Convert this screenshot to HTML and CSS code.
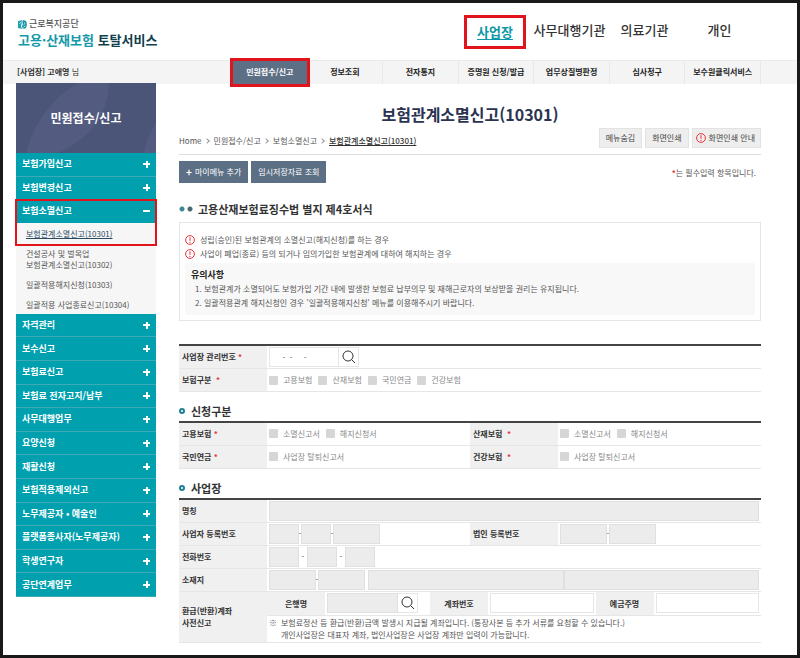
FILE: index.html
```html
<!DOCTYPE html>
<html lang="ko">
<head>
  <meta charset="UTF-8"/>
  <meta name="viewport" content="width=device-width, initial-scale=1"/>
  <title>보험관계소멸신고(10301) - 고용·산재보험 토탈서비스</title>
  <link rel="stylesheet" href="styles.css">
</head>
<body>
  <header class="header">
    <a class="logo" href="#">
      <span class="logo-org">
        <svg class="logo-mark" viewBox="0 0 10 10" aria-hidden="true">
          <path d="M0 1.500L4.500 0C3.500 2 5 3.500 3.500 5.500C3 7.500 4 9 5.500 10L0 9Z" fill="#1ba3b5"/>
          <path d="M5 0.500C8 0 10 1.500 9.800 5C9.800 8 8.500 9.800 6.500 9.800C4.500 8.500 4 7 5 5.500C6 4 4.500 2.500 5 0.500Z" fill="#0d8f9e"/>
          <path d="M1.500 4L3.500 2.500M6 5.500C8 5 8 3 6.500 2.500M6 8L8.500 6.500" fill="none" stroke="#fff" stroke-width="0.800"/>
        </svg>
        근로복지공단
      </span>
      <span class="logo-name"><em>고용·산재보험</em> 토탈서비스</span>
    </a>
    <nav class="user-menu">
      <a class="on" href="#">사업장</a>
      <a href="#">사무대행기관</a>
      <a href="#">의료기관</a>
      <a href="#">개인</a>
    </nav>
  </header>

  <div class="gnb">
    <p class="user"><b>[사업장] 고애영</b> 님</p>
    <nav class="gnb-menu">
      <a class="on" href="#">민원접수/신고</a>
      <a href="#">정보조회</a>
      <a href="#">전자통지</a>
      <a href="#">증명원 신청/발급</a>
      <a href="#">업무상질병판정</a>
      <a href="#">심사청구</a>
      <a href="#">보수원클릭서비스</a>
    </nav>
  </div>

  <div class="container">
    <aside class="side">
      <h2 class="side-title">
        <svg class="side-leaf" viewBox="0 0 140 70" preserveAspectRatio="none" aria-hidden="true">
          <path d="M93 0H62C38 14 18 38 10 70H42C72 56 92 34 93 0Z"/>
          <path d="M140 40C134 48 130 58 128 70H140Z"/>
        </svg>
        <span>민원접수/신고</span>
      </h2>
      <nav class="lnb">
        <button type="button">보험가입신고</button>
        <button type="button">보험변경신고</button>
        <button type="button" class="open">보험소멸신고</button>
        <ul class="sub">
          <li class="on"><a href="#">보험관계소멸신고(10301)</a></li>
          <li><a href="#">건설공사 및 벌목업<br>보험관계소멸신고(10302)</a></li>
          <li><a href="#">일괄적용해지신청(10303)</a></li>
          <li><a href="#">일괄적용 사업종료신고(10304)</a></li>
        </ul>
        <button type="button">자격관리</button>
        <button type="button">보수신고</button>
        <button type="button">보험료신고</button>
        <button type="button">보험료 전자고지/납부</button>
        <button type="button">사무대행업무</button>
        <button type="button">요양신청</button>
        <button type="button">재활신청</button>
        <button type="button">보험적용제외신고</button>
        <button type="button">노무제공자 • 예술인</button>
        <button type="button">플랫폼종사자(노무제공자)</button>
        <button type="button">학생연구자</button>
        <button type="button">공단연계업무</button>
      </nav>
    </aside>

    <main class="content">
      <h1>보험관계소멸신고(10301)</h1>
      <div class="location">
        <nav class="path">
          <a href="#">Home</a><i></i><a href="#">민원접수/신고</a><i></i><a href="#">보험소멸신고</a><i></i><a class="on" href="#">보험관계소멸신고(10301)</a>
        </nav>
        <div class="tools">
          <button type="button">메뉴숨김</button>
          <button type="button">화면인쇄</button>
          <button type="button"><svg class="warn" viewBox="0 0 10 10" aria-hidden="true"><circle cx="5" cy="5" r="4.400"/><path d="M5 2.200V5.800M5 6.800V8"/></svg>화면인쇄 안내</button>
        </div>
      </div>

      <div class="actions">
        <button type="button"><b>+</b>마이메뉴 추가</button>
        <button type="button">임시저장자료 조회</button>
        <p><span class="req">*</span>는 필수입력 항목입니다.</p>
      </div>

      <h2 class="form-title">고용산재보험료징수법 별지 제4호서식</h2>

      <section class="guide">
        <p><svg class="warn" viewBox="0 0 10 10" aria-hidden="true"><circle cx="5" cy="5" r="4.400"/><path d="M5 2.200V5.800M5 6.800V8"/></svg>성립(승인)된 보험관계의 소멸신고(해지신청)를 하는 경우</p>
        <p><svg class="warn" viewBox="0 0 10 10" aria-hidden="true"><circle cx="5" cy="5" r="4.400"/><path d="M5 2.200V5.800M5 6.800V8"/></svg>사업이 폐업(종료) 등의 되거나 임의가입한 보험관계에 대하여 해지하는 경우</p>
        <div class="notice">
          <h3>유의사항</h3>
          <ol>
            <li>보험관계가 소멸되어도 보험가입 기간 내에 발생한 보험료 납부의무 및 재해근로자의 보상받을 권리는 유지됩니다.</li>
            <li>일괄적용관계 해지신청인 경우 '일괄적용해지신청' 메뉴를 이용해주시기 바랍니다.</li>
          </ol>
        </div>
      </section>

      <form>
        <table class="form-table first">
          <colgroup><col class="c-label"><col></colgroup>
          <tr>
            <th scope="row"><label for="manageNo">사업장 관리번호</label> <span class="req">*</span></th>
            <td>
              <div class="search">
                <input type="text" id="manageNo" class="w-no" value="  -  -     -">
                <button type="button" aria-label="사업장 검색"><svg viewBox="0 0 14 14" aria-hidden="true"><circle cx="6" cy="6" r="5"/><path d="M9.500 9.500L13 13"/></svg></button>
              </div>
            </td>
          </tr>
          <tr>
            <th scope="row">보험구분 &nbsp;<span class="req">*</span></th>
            <td>
              <div class="checks">
                <label><input type="checkbox" disabled>고용보험</label>
                <label><input type="checkbox" disabled>산재보험</label>
                <label><input type="checkbox" disabled>국민연금</label>
                <label><input type="checkbox" disabled>건강보험</label>
              </div>
            </td>
          </tr>
        </table>

        <h3 class="sec-title">신청구분</h3>
        <table class="form-table">
          <colgroup><col class="c-label"><col><col class="c-label"><col></colgroup>
          <tr>
            <th scope="row">고용보험 <span class="req">*</span></th>
            <td>
              <div class="checks">
                <label><input type="checkbox" disabled>소멸신고서</label>
                <label><input type="checkbox" disabled>해지신청서</label>
              </div>
            </td>
            <th scope="row">산재보험 &nbsp;<span class="req">*</span></th>
            <td>
              <div class="checks">
                <label><input type="checkbox" disabled>소멸신고서</label>
                <label><input type="checkbox" disabled>해지신청서</label>
              </div>
            </td>
          </tr>
          <tr>
            <th scope="row">국민연금 <span class="req">*</span></th>
            <td>
              <div class="checks">
                <label><input type="checkbox" disabled>사업장 탈퇴신고서</label>
              </div>
            </td>
            <th scope="row">건강보험 &nbsp;<span class="req">*</span></th>
            <td>
              <div class="checks">
                <label><input type="checkbox" disabled>사업장 탈퇴신고서</label>
              </div>
            </td>
          </tr>
        </table>

        <h3 class="sec-title">사업장</h3>
        <table class="form-table">
          <colgroup><col class="c-label"><col><col class="c-label"><col></colgroup>
          <tr>
            <th scope="row"><label for="compName">명칭</label></th>
            <td colspan="3"><div class="fields"><input type="text" id="compName" class="grow" disabled></div></td>
          </tr>
          <tr>
            <th scope="row"><label for="bizNo1">사업자 등록번호</label></th>
            <td>
              <div class="fields tight">
                <input type="text" id="bizNo1" class="w-s" disabled><i>-</i><input type="text" class="w-s" aria-label="사업자 등록번호 2" disabled><i>-</i><input type="text" class="w-m" aria-label="사업자 등록번호 3" disabled>
              </div>
            </td>
            <th scope="row"><label for="corpNo1">법인 등록번호</label></th>
            <td>
              <div class="fields tight">
                <input type="text" id="corpNo1" class="w-m" disabled><i>-</i><input type="text" class="w-m" aria-label="법인 등록번호 2" disabled>
              </div>
            </td>
          </tr>
          <tr>
            <th scope="row"><label for="tel1">전화번호</label></th>
            <td colspan="3">
              <div class="fields">
                <input type="text" id="tel1" class="w-s" disabled><i>-</i><input type="text" class="w-s" aria-label="전화번호 2" disabled><i>-</i><input type="text" class="w-s" aria-label="전화번호 3" disabled>
              </div>
            </td>
          </tr>
          <tr>
            <th scope="row"><label for="zip1">소재지</label></th>
            <td colspan="3">
              <div class="fields tight">
                <input type="text" id="zip1" class="w-m" disabled><i>-</i><input type="text" class="w-m" aria-label="우편번호 2" disabled>
                <div class="addr">
                  <input type="text" aria-label="주소" disabled><input type="text" aria-label="상세주소" disabled>
                </div>
              </div>
            </td>
          </tr>
          <tr>
            <th scope="row">환급(반환)계좌<br>사전신고</th>
            <td colspan="3" class="account">
              <div class="bank">
                <label for="bankName">은행명</label>
                <div class="search">
                  <input type="text" id="bankName" class="w-bank" disabled>
                  <button type="button" aria-label="은행 검색"><svg viewBox="0 0 14 14" aria-hidden="true"><circle cx="6" cy="6" r="5"/><path d="M9.500 9.500L13 13"/></svg></button>
                </div>
                <label for="accountNo">계좌번호</label>
                <input type="text" id="accountNo" class="grow">
                <label for="accountOwner">예금주명</label>
                <input type="text" id="accountOwner" class="grow">
              </div>
              <p class="tip"><span>※</span><span>보험료정산 등 환급(반환)금액 발생시 지급될 계좌입니다. (통장사본 등 추가 서류를 요청할 수 있습니다.)<br>개인사업장은 대표자 계좌, 법인사업장은 사업장 계좌만 입력이 가능합니다.</span></p>
            </td>
          </tr>
        </table>
      </form>
    </main>
  </div>
</body>
</html>
```
FILE: styles.css
```css
*, *::before, *::after { box-sizing:border-box; margin:0; padding:0 }
body {
  min-height:100vh; border:3px solid #19191a; background:#fff;
  font-family:"Noto Sans CJK KR", sans-serif;
  font-size:8px; line-height:12px; color:#555;
}
a { color:inherit; text-decoration:none }
ul, ol { list-style:none }
i, em { font-style:normal }
button, input { font:inherit; color:inherit }
button { cursor:pointer }
.req { color:#e5343a; font-weight:700 }

/* header */
.header { display:flex; justify-content:space-between; height:57px; padding:0 40px 0 15px }
.logo { padding-top:14px; color:#123f4c }
.logo-org { display:flex; align-items:center; gap:2px; font-size:9px; line-height:14px; font-weight:500; color:#555 }
.logo-mark { width:9px; height:9px }
.logo-name { display:block; font-size:13px; line-height:18px; font-weight:700 }
.logo-name em { color:#1499a8 }
.user-menu { display:flex; align-items:flex-start; padding-top:12px; font-size:13px; line-height:30px; font-weight:500; color:#333 }
.user-menu a { width:75px; text-align:center; white-space:nowrap }
.user-menu .on { width:62px; height:34px; margin-right:6px; border:3px solid #e0141b; line-height:28px; color:#0c98a6; font-weight:700; text-decoration:underline; text-underline-offset:2px }

/* gnb */
.gnb { display:flex; height:24px; background:#f4f4f4; border-top:1px solid #ebebeb; line-height:22px }
.user { width:229px; padding-left:14px; color:#333 }
.gnb-menu { flex:1; display:grid; grid-template-columns:repeat(7, 1fr); margin-right:36px; font-weight:700; color:#222 }
.gnb-menu a { border-right:1px solid #e8e8e8; text-align:center; white-space:nowrap }
.gnb-menu .on { margin:0 1px; background:#5d6f85; color:#fff; border:0; outline:3px solid #e0141b }

/* layout */
.container { display:flex; align-items:flex-start; gap:23px; padding:0 36px 0 13px }
.side { flex:0 0 140px; margin-top:-1px }
.content { flex:1; min-width:0 }

/* side menu */
.side-title {
  position:relative; height:70px; background:#4a5577;
  color:#fff; font-size:12px; line-height:70px; font-weight:700; text-align:center;
}
.side-leaf { position:absolute; left:0; top:0; width:100%; height:100%; fill:#535c80 }
.side-title span { position:relative }
.lnb { display:flex; flex-direction:column; min-height:444px }
.lnb button {
  flex:1; display:flex; justify-content:space-between; align-items:center;
  padding:0 6px; border:0; border-bottom:1px solid #3cabb5; background:#00a0af;
  color:#fff; font-size:9px; line-height:12px; font-weight:700; text-align:left;
}
.lnb button::after {
  content:""; width:7px; height:7px;
  background:linear-gradient(#fff, #fff) center/7px 2px no-repeat, linear-gradient(#fff, #fff) center/2px 7px no-repeat;
}
.lnb .open { position:relative; border-bottom:0 }
.lnb .open::after { background:linear-gradient(#fff, #fff) center/7px 2px no-repeat }
.lnb .open::before { content:""; position:absolute; z-index:1; left:-1px; right:-1px; top:-1px; height:47px; border:2px solid #e0141b }
.sub { flex:none; padding:5px 0 4px; background:#f6f6f6; line-height:11px }
.sub li { padding:0 10px 9px }
.sub li:last-child { padding-bottom:0 }
.sub .on { color:#2b4a63; text-decoration:underline }

/* title */
h1 { padding-top:16px; font-size:16px; line-height:28px; font-weight:700; color:#2b3350; text-align:center }
.location { display:flex; justify-content:space-between; align-items:flex-start; height:27px; border-bottom:1px solid #ddd }
.path { display:flex; align-items:center; padding-top:7px }
.path i { width:4px; height:4px; margin:0 5px 0 3px; border:solid #999; border-width:1px 1px 0 0; transform:rotate(45deg) }
.path .on { font-weight:500; color:#333; text-decoration:underline }
.tools { display:flex; gap:3px }
.tools button { display:flex; align-items:center; gap:3px; height:20px; padding:0 6px; border:1px solid #e2e2e2; background:#eee; color:#444 }
.tools button:last-child { padding:0 5px 0 3px }
.warn { flex:none; width:10px; height:10px; fill:none; stroke:#e5343a; stroke-width:1 }

.actions { display:flex; gap:3px; padding-top:6px }
.actions button { display:flex; align-items:center; gap:3px; height:22px; padding:0 7px; border:0; background:#5d6f85; color:#fff }
.actions b { font-size:10px }
.actions p { margin-left:auto; padding:6px 5px 0 0 }

.form-title { display:flex; align-items:center; margin-top:17px; font-size:11px; line-height:18px; font-weight:700; color:#333 }
.form-title::before {
  content:""; width:14px; height:6px; margin-right:5px;
  background:radial-gradient(circle at 3px 3px, #3d8996 2px, transparent 3px), radial-gradient(circle at 11px 3px, #4c6673 2px, transparent 3px);
}

/* guide */
.guide { margin-top:4px; padding:10px 5px 5px; border:1px solid #e6e6e6 }
.guide > p { display:flex; align-items:center; gap:5px; line-height:14px }
.notice { margin-top:2px; padding:5px 6px; background:#f8f8f8 }
.notice h3 { font-size:9px; line-height:14px; font-weight:700; color:#222 }
.notice ol { padding-left:13px; list-style:decimal; line-height:14px }

/* form tables */
.form-table { width:100%; border-collapse:collapse; table-layout:fixed; border-top:2px solid #444 }
.form-table.first { margin-top:23px }
.c-label { width:88px }
.form-table th, .form-table td { height:23px; border-bottom:1px solid #e6e6e6 }
.form-table th { padding:0 3px; background:#f0f0f0; color:#333; font-weight:700; text-align:left }
.form-table td { padding:1px 2px }
.sec-title { display:flex; align-items:center; gap:6px; margin-top:9px; font-size:11px; line-height:20px; font-weight:700; color:#333 }
.sec-title::before { content:""; width:6px; height:6px; border:2px solid #1f7f98; border-radius:50% }

.checks { display:flex; gap:6px; color:#888 }
.checks label { display:flex; align-items:center; gap:5px }
.checks input { appearance:none; width:9px; height:9px; background:#d6d6d6; border-radius:1px }

input[type="text"] { height:20px; min-width:0; border:1px solid #e6e6e6; background:#fff; white-space:pre }
input[type="text"]:disabled { background:#ececec; border-color:#e0e0e0 }
.fields { display:flex; align-items:center }
.fields i { width:8px; text-align:center }
.fields.tight i { width:2px; display:flex; justify-content:center }
.w-s { width:30px }
.w-m { width:47px }
.w-no { width:70px; padding:0 8px }
.w-bank { width:71px }
.grow { flex:1 }
.addr { flex:1; display:flex; margin-left:3px }
.addr input { flex:1 }
.addr input + input { border-left-color:#d0d0d0 }

.search { display:flex }
.search button { width:20px; height:20px; border:1px solid #e6e6e6; border-left:0; background:#fff }
.search svg { display:block; width:14px; height:14px; margin:0 auto; fill:none; stroke:#333; stroke-width:1 }

.form-table .account { padding:0 }
.bank { display:flex; align-items:center; gap:2px; padding-right:2px; border-bottom:1px solid #e6e6e6 }
.bank label { width:58px; background:#f0f0f0; color:#333; font-weight:700; line-height:23px; text-align:center }
.bank .search { margin-right:10px }
.tip { display:flex; gap:4px; padding:1px 2px }
```
